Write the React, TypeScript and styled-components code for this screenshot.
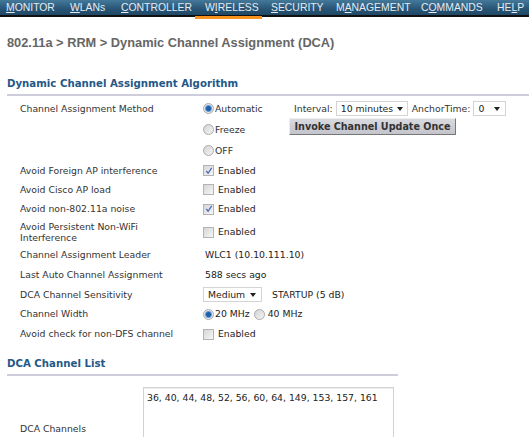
import React from 'react';
import styled, { createGlobalStyle, css } from 'styled-components';

const GlobalStyle = createGlobalStyle`
	body {
		margin: 0;
		background: #fff;
		font-family: 'DejaVu Sans', Verdana, sans-serif;
		font-size: 9.3px;
		color: #333;
	}
`;

const Nav = styled.div`
	display: flex;
	height: 15px;
	background: linear-gradient(#44799a, #285475 60%, #1f4865);
	border-bottom: 2px solid #111;
	white-space: nowrap;
`;

const NavItem = styled.div<{ $active?: boolean; $w: number }>`
	position: relative;
	box-sizing: border-box;
	flex: none;
	width: ${(p) => p.$w}px;
	padding-left: ${(p) => (p.$active ? 10 : 6)}px;
	font-family: 'Liberation Sans', Arial, sans-serif;
	font-size: 10.4px;
	line-height: 15px;
	color: #e4ecf3;
	${(p) =>
		p.$active &&
		css`
			&::after {
				content: '';
				position: absolute;
				left: 0;
				right: 3px;
				bottom: -4px;
				height: 3px;
				background: #f7931e;
			}
		`}
`;

const Title = styled.h1`
	margin: 18px 0 0 7px;
	font-family: 'Liberation Sans', Arial, sans-serif;
	font-size: 12.8px;
	line-height: 16px;
	font-weight: bold;
	color: #666;
`;

const SectionHead = styled.div<{ $width?: number }>`
	margin: ${(p) => (p.$width ? '13px' : '26px')} 0 0 7px;
	width: ${(p) => (p.$width ? `${p.$width}px` : 'auto')};
	padding-bottom: 3px;
	border-bottom: 2px solid #cdcddb;
	font-weight: bold;
	font-size: 10.2px;
	line-height: 14px;
	color: #245887;
`;

const Rows = styled.div<{ $top?: number }>`
	padding-top: ${(p) => p.$top ?? 0}px;
`;

const Row = styled.div<{ $h?: number }>`
	display: grid;
	grid-template-columns: 183px 1fr;
	align-items: center;
	height: ${(p) => (p.$h ? `${p.$h}px` : 'auto')};
	padding-left: 20px;
`;

const Label = styled.div<{ $tight?: boolean; $top?: number }>`
	line-height: ${(p) => (p.$tight ? '11px' : '12px')};
	padding-top: ${(p) => p.$top ?? 0}px;
	align-self: ${(p) => (p.$top !== undefined ? 'start' : 'center')};
	color: #333;
	padding-right: 8px;
`;

const Value = styled.div`
	display: flex;
	align-items: center;
	color: #222;
	white-space: nowrap;
	line-height: 12px;
`;

const Gap = styled.span<{ $w: number }>`
	display: inline-block;
	width: ${(p) => p.$w}px;
`;

const MethodCell = styled.div`
	display: flex;
	align-items: flex-start;
`;

const RadioList = styled.div`
	flex: none;
	width: 86px;
	display: flex;
	flex-direction: column;
`;

const RadioLine = styled.div`
	display: flex;
	align-items: center;
	height: 21px;
`;

const RadioBox = styled.span<{ $on?: boolean }>`
	display: inline-block;
	flex: none;
	box-sizing: border-box;
	width: 11px;
	height: 11px;
	margin-right: 1px;
	border-radius: 50%;
	border: 1px solid #ababab;
	background: ${(p) =>
		p.$on
			? 'radial-gradient(circle, #1d5fa8 0 2px, #6a9bd0 3px, #dfe6ee 4px)'
			: 'linear-gradient(135deg, #d4d4d4, #f4f4f4)'};
`;

const CheckBox = styled.span`
	display: inline-flex;
	flex: none;
	align-items: center;
	justify-content: center;
	box-sizing: border-box;
	width: 11px;
	height: 11px;
	margin-right: 4px;
	border: 1px solid #b4b4b4;
	background: linear-gradient(135deg, #d6d6d6, #f6f6f6);
`;

const Controls = styled.div`
	display: flex;
	flex-direction: column;
	padding-top: 3px;
`;

const ControlLine = styled.div`
	display: flex;
	align-items: center;
	padding-left: 5px;
	height: 15px;
	white-space: nowrap;
`;

const Select = styled.div<{ $w: number }>`
	display: inline-flex;
	flex: none;
	align-items: center;
	justify-content: space-between;
	box-sizing: border-box;
	width: ${(p) => p.$w}px;
	height: 15px;
	padding: 0 5px 0 4px;
	margin: 0 4px 0 3px;
	border: 1px solid #d4d4d4;
	background: #fff;
	color: #222;
	&::after {
		content: '';
		margin-left: 4px;
		border-left: 3px solid transparent;
		border-right: 3px solid transparent;
		border-top: 4px solid #222;
	}
`;

const Button = styled.button`
	margin-top: 2px;
	width: 167px;
	height: 17px;
	padding: 0;
	font-family: 'DejaVu Sans', Verdana, sans-serif;
	font-size: 9.6px;
	font-weight: bold;
	white-space: nowrap;
	color: #333;
	background: linear-gradient(#d9d9e0, #c4c4cc);
	border: 1px solid;
	border-color: #eee #777 #777 #eee;
`;

const TextArea = styled.div`
	box-sizing: border-box;
	width: 251px;
	height: 86px;
	margin-left: -60px;
	padding: 3px 3px;
	border: 1px solid #d2d2d2;
	box-shadow: inset 0 1px 1px #eee;
	color: #222;
	line-height: 14px;
	white-space: nowrap;
`;

const Check = ({ on }: { on?: boolean }) => (
	<CheckBox>
		{on && (
			<svg width="8" height="8" viewBox="0 0 9 9">
				<path d="M1.5 4.5 L3.5 7 L7.5 1" fill="none" stroke="#4a66b8" strokeWidth="1.4" />
			</svg>
		)}
	</CheckBox>
);

const navItems: { pre: string; key: string; post: string; w: number; active?: boolean }[] = [
	{ pre: '', key: 'M', post: 'ONITOR', w: 64 },
	{ pre: '', key: 'W', post: 'LANs', w: 51 },
	{ pre: '', key: 'C', post: 'ONTROLLER', w: 80 },
	{ pre: 'W', key: 'I', post: 'RELESS', w: 70, active: true },
	{ pre: '', key: 'S', post: 'ECURITY', w: 65 },
	{ pre: 'M', key: 'A', post: 'NAGEMENT', w: 85 },
	{ pre: 'C', key: 'O', post: 'MMANDS', w: 76 },
	{ pre: 'HE', key: 'L', post: 'P', w: 38 },
];

const App = () => {
	return (
		<>
			<GlobalStyle />
			<Nav>
				{navItems.map((n) => (
					<NavItem key={n.post} $w={n.w} $active={n.active}>
						{n.pre}
						<u>{n.key}</u>
						{n.post}
					</NavItem>
				))}
			</Nav>
			<Title>802.11a &gt; RRM &gt; Dynamic Channel Assignment (DCA)</Title>

			<SectionHead>Dynamic Channel Assignment Algorithm</SectionHead>
			<Rows $top={2}>
				<Row $h={63}>
					<Label $top={5}>Channel Assignment Method</Label>
					<MethodCell>
						<RadioList>
							<RadioLine>
								<RadioBox $on />
								Automatic
							</RadioLine>
							<RadioLine>
								<RadioBox />
								Freeze
							</RadioLine>
							<RadioLine>
								<RadioBox />
								OFF
							</RadioLine>
						</RadioList>
						<Controls>
							<ControlLine>
								Interval:
								<Select $w={72}>10 minutes</Select>
								AnchorTime:
								<Select $w={33}>0</Select>
							</ControlLine>
							<Button>Invoke Channel Update Once</Button>
						</Controls>
					</MethodCell>
				</Row>
				<Row $h={19}>
					<Label>Avoid Foreign AP interference</Label>
					<Value>
						<Check on />
						Enabled
					</Value>
				</Row>
				<Row $h={19}>
					<Label>Avoid Cisco AP load</Label>
					<Value>
						<Check />
						Enabled
					</Value>
				</Row>
				<Row $h={20}>
					<Label>Avoid non-802.11a noise</Label>
					<Value>
						<Check on />
						Enabled
					</Value>
				</Row>
				<Row $h={26}>
					<Label $tight>
						Avoid Persistent Non-WiFi
						<br />
						Interference
					</Label>
					<Value>
						<Check />
						Enabled
					</Value>
				</Row>
				<Row $h={20}>
					<Label>Channel Assignment Leader</Label>
					<Value>
						<Gap $w={2} />
						WLC1 (10.10.111.10)
					</Value>
				</Row>
				<Row $h={20}>
					<Label>Last Auto Channel Assignment</Label>
					<Value>
						<Gap $w={2} />
						588 secs ago
					</Value>
				</Row>
				<Row $h={19}>
					<Label>DCA Channel Sensitivity</Label>
					<Value>
						<Select $w={59} style={{ marginLeft: 0 }}>Medium</Select>
						<Gap $w={6} />
						STARTUP (5 dB)
					</Value>
				</Row>
				<Row $h={20}>
					<Label>Channel Width</Label>
					<Value>
						<RadioBox $on />
						20 MHz
						<Gap $w={4} />
						<RadioBox />
						<Gap $w={2} />
						40 MHz
					</Value>
				</Row>
				<Row $h={20}>
					<Label>Avoid check for non-DFS channel</Label>
					<Value>
						<Check />
						Enabled
					</Value>
				</Row>
			</Rows>

			<SectionHead $width={391}>DCA Channel List</SectionHead>
			<Rows $top={11}>
				<Row $h={86}>
					<Label $top={36}>DCA Channels</Label>
					<TextArea>36, 40, 44, 48, 52, 56, 60, 64, 149, 153, 157, 161</TextArea>
				</Row>
			</Rows>
		</>
	);
};

export default App;
